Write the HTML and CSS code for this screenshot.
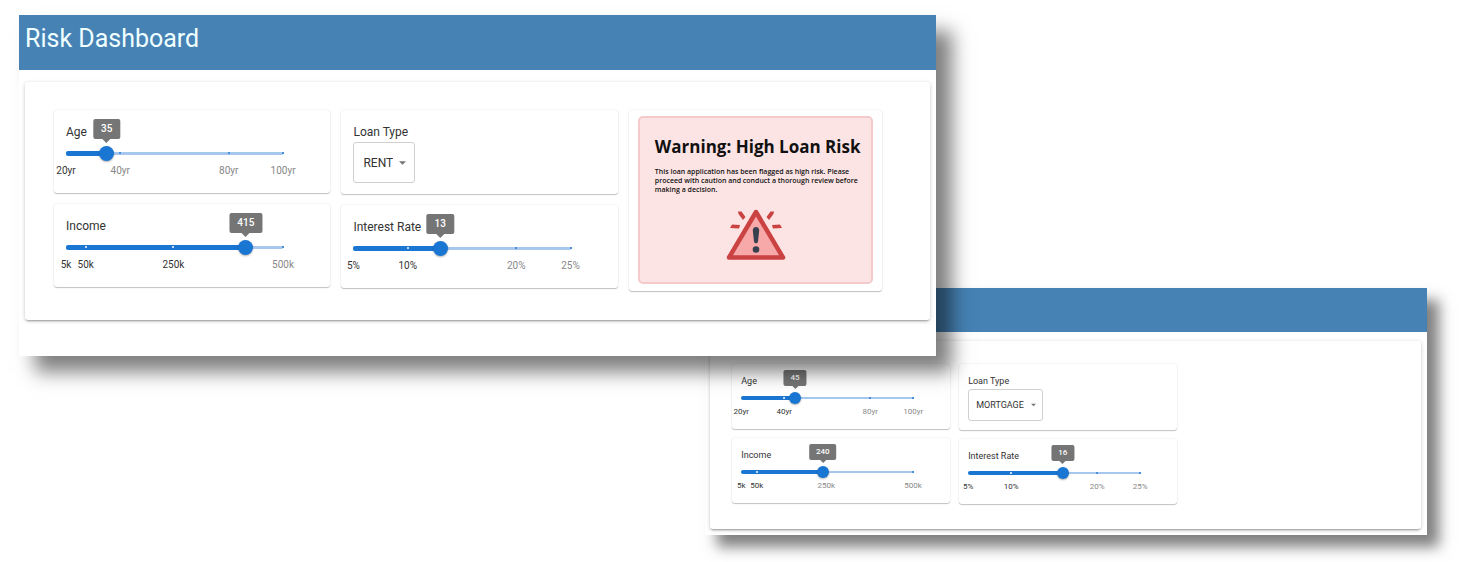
FILE: index.html
```
<!DOCTYPE html>
<html lang="en">
<head>
<meta charset="utf-8">
<title>Risk Dashboard</title>
<link rel="stylesheet" href="styles.css">
</head>
<body>
<main class="stage">

  <section class="window window-back" aria-label="Mortgage application">
    <header class="bar"></header>
    <div class="panel">
      <div class="column">
        <div class="card">
          <label class="label" for="age-b">Age</label>
          <div class="slider">
            <div class="rail"></div><div class="fill" style="width:31.25%"></div>
            <i class="tick on" style="left:25%"></i><i class="tick" style="left:75%"></i><i class="tick" style="left:100%"></i>
            <input id="age-b" type="range" min="20" max="100" value="45">
            <output class="bubble" for="age-b" style="left:31.25%">45</output>
          </div>
          <div class="marks"><span class="on" style="left:0%">20yr</span><span class="on" style="left:25%">40yr</span><span style="left:75%">80yr</span><span style="left:100%">100yr</span></div>
        </div>
        <div class="card">
          <label class="label" for="income-b">Income</label>
          <div class="slider">
            <div class="rail"></div><div class="fill" style="width:47.47%"></div>
            <i class="tick on" style="left:9.09%"></i><i class="tick" style="left:100%"></i>
            <input id="income-b" type="range" min="5" max="500" value="240">
            <output class="bubble" for="income-b" style="left:47.47%">240</output>
          </div>
          <div class="marks"><span class="on" style="left:0%">5k</span><span class="on" style="left:9.09%">50k</span><span style="left:49.49%">250k</span><span style="left:100%">500k</span></div>
        </div>
      </div>
      <div class="column">
        <div class="card card-select">
          <label class="label" for="loan-b">Loan Type</label>
          <div class="select">
            <select id="loan-b"><option>MORTGAGE</option></select>
            <svg class="caret" viewBox="0 0 10 5" aria-hidden="true"><path d="M0 0h10L5 5z"/></svg>
          </div>
        </div>
        <div class="card">
          <label class="label" for="rate-b">Interest Rate</label>
          <div class="slider">
            <div class="rail"></div><div class="fill" style="width:55%"></div>
            <i class="tick on" style="left:25%"></i><i class="tick" style="left:75%"></i><i class="tick" style="left:100%"></i>
            <input id="rate-b" type="range" min="5" max="25" value="16">
            <output class="bubble" for="rate-b" style="left:55%">16</output>
          </div>
          <div class="marks"><span class="on" style="left:0%">5%</span><span class="on" style="left:25%">10%</span><span style="left:75%">20%</span><span style="left:100%">25%</span></div>
        </div>
      </div>
    </div>
  </section>

  <section class="window window-front" aria-label="Rent application">
    <header class="bar"><h1 class="title">Risk Dashboard</h1></header>
    <div class="panel">
      <div class="column">
        <div class="card">
          <label class="label" for="age-f">Age</label>
          <div class="slider">
            <div class="rail"></div><div class="fill" style="width:18.75%"></div>
            <i class="tick" style="left:25%"></i><i class="tick" style="left:75%"></i><i class="tick" style="left:100%"></i>
            <input id="age-f" type="range" min="20" max="100" value="35">
            <output class="bubble" for="age-f" style="left:18.75%">35</output>
          </div>
          <div class="marks"><span class="on" style="left:0%">20yr</span><span style="left:25%">40yr</span><span style="left:75%">80yr</span><span style="left:100%">100yr</span></div>
        </div>
        <div class="card">
          <label class="label" for="income-f">Income</label>
          <div class="slider">
            <div class="rail"></div><div class="fill" style="width:82.83%"></div>
            <i class="tick on" style="left:9.09%"></i><i class="tick on" style="left:49.49%"></i><i class="tick" style="left:100%"></i>
            <input id="income-f" type="range" min="5" max="500" value="415">
            <output class="bubble" for="income-f" style="left:82.83%">415</output>
          </div>
          <div class="marks"><span class="on" style="left:0%">5k</span><span class="on" style="left:9.09%">50k</span><span class="on" style="left:49.49%">250k</span><span style="left:100%">500k</span></div>
        </div>
      </div>
      <div class="column">
        <div class="card card-select">
          <label class="label" for="loan-f">Loan Type</label>
          <div class="select">
            <select id="loan-f"><option>RENT</option></select>
            <svg class="caret" viewBox="0 0 10 5" aria-hidden="true"><path d="M0 0h10L5 5z"/></svg>
          </div>
        </div>
        <div class="card">
          <label class="label" for="rate-f">Interest Rate</label>
          <div class="slider">
            <div class="rail"></div><div class="fill" style="width:40%"></div>
            <i class="tick on" style="left:25%"></i><i class="tick" style="left:75%"></i><i class="tick" style="left:100%"></i>
            <input id="rate-f" type="range" min="5" max="25" value="13">
            <output class="bubble" for="rate-f" style="left:40%">13</output>
          </div>
          <div class="marks"><span class="on" style="left:0%">5%</span><span class="on" style="left:25%">10%</span><span style="left:75%">20%</span><span style="left:100%">25%</span></div>
        </div>
      </div>
      <div class="column">
        <div class="card card-alert">
          <div class="alert" role="alert">
            <h2 class="alert-title">Warning: High Loan Risk</h2>
            <p class="alert-text">This loan application has been flagged as high risk. Please<br>proceed with caution and conduct a thorough review before<br>making a decision.</p>
            <svg class="alert-icon" viewBox="0 0 60 54" aria-hidden="true">
              <path d="M30 4 57 49.500H3z" fill="#f7a8a8" stroke="#cb4242" stroke-width="4.500" stroke-linejoin="round"/>
              <path d="M12 3.500h3.500l4 5.500-2.500 3-4.500-6zM48 3.500h-3.500l-4 5.500 2.500 3 4.500-6zM6 16.500l8 .5-1 3.500-9-.5zM54 16.500l-8 .5 1 3.500 9-.5z" fill="#cb4242"/>
              <path d="M26.800 22.500c0-4.600 6.400-4.600 6.400 0L32 33.500c-.3 2.400-3.700 2.400-4 0z" fill="#36404e"/>
              <circle cx="30" cy="41.500" r="3.300" fill="#36404e"/>
            </svg>
          </div>
        </div>
      </div>
    </div>
  </section>

</main>
</body>
</html>
```
FILE: styles.css
```
* { box-sizing: border-box; }

body {
  margin: 0;
  background: #fff;
  color: #333;
  font-family: Roboto, "Liberation Sans", sans-serif;
}

.stage {
  position: relative;
  min-height: 100vh;
  overflow: hidden;
}

/* Overlapping windows; each sets its own scale through variables */
.window {
  position: absolute;
  background: #fff;
}

.window-front {
  --gap: 11px;
  --pad: 12px;
  --label: 12px;
  --label-line: 20px;
  --small: 10px;
  --track: 22px;
  --marks: 14px;
  --tail: 15px;
  --thumb: 15px;
  --fill: 5px;
  --rail: 3px;
  --bubble: 20px;
  --bubble-pad: 8px;
  --bubble-lift: 14px;
  --arrow: 4px;
  --select: 41px;
  --select-left: 9px;
  --select-right: 21px;
  --select-tail: 11px;
  --caret: 7px;
  --slider: 86%;
  top: 15px;
  left: 19px;
  width: 62.4%;
  padding-bottom: 36px;
  box-shadow: 16px 16px 18px rgba(0, 0, 0, .5);
}

.window-back {
  --gap: 9px;
  --pad: 9px;
  --label: 9px;
  --label-line: 16px;
  --small: 8px;
  --track: 18px;
  --marks: 10px;
  --tail: 12px;
  --thumb: 12px;
  --fill: 4px;
  --rail: 2px;
  --bubble: 16px;
  --bubble-pad: 7px;
  --bubble-lift: 12px;
  --arrow: 3px;
  --select: 32px;
  --select-left: 7px;
  --select-right: 18px;
  --select-tail: 9px;
  --caret: 5px;
  --slider: 86%;
  top: 288px;
  right: 43px;
  width: 49.1%;
  padding-bottom: 6px;
  box-shadow: 12px 12px 13px rgba(0, 0, 0, .5);
}

.bar { background: #4682b4; }
.window-front .bar { min-height: 55px; padding: 8px 6px; }
.window-back .bar { min-height: 44px; }

.title {
  margin: 0;
  color: #f0ffff;
  font-size: 25px;
  font-weight: 400;
  line-height: 32px;
}

.panel {
  display: grid;
  gap: var(--gap);
  border-radius: 3px;
  box-shadow: 0 2px 2px -1px rgba(0, 0, 0, .3), 0 1px 4px rgba(0, 0, 0, .2);
}
.window-front .panel {
  grid-template-columns: 276fr 276fr 253fr;
  margin: 12px 6px 0;
  padding: 28px 48px 29px 29px;
}
.window-back .panel {
  grid-template-columns: 218fr 218fr 213fr;
  margin: 9px 6px 0 5px;
  padding: 23px 22px 25px;
}

.column {
  display: flex;
  flex-direction: column;
  gap: var(--gap);
}

.card {
  padding: var(--pad) var(--pad) var(--tail);
  border-radius: 3px;
  box-shadow: 0 1px 1px rgba(0, 0, 0, .22), 0 0 2px rgba(0, 0, 0, .12);
}
.card-select { padding-bottom: var(--select-tail); }

.label {
  display: block;
  width: max-content;
  font-size: var(--label);
  line-height: var(--label-line);
}

.slider {
  position: relative;
  display: flex;
  align-items: center;
  width: var(--slider);
  height: var(--track);
}
.rail, .fill {
  position: absolute;
  left: 0;
  border-radius: 2px;
}
.rail { width: 100%; height: var(--rail); background: #a6c8ee; }
.fill { height: var(--fill); background: #1976d2; }

.tick {
  position: absolute;
  width: 2px;
  height: 2px;
  margin-left: -1px;
  background: #4a8fdb;
}
.tick.on { background: #c6dcf4; }

.slider input {
  position: relative;
  flex: none;
  width: calc(100% + var(--thumb));
  height: var(--thumb);
  margin: 0 calc(var(--thumb) / -2);
  appearance: none;
  background: transparent;
}
.slider input::-webkit-slider-thumb {
  appearance: none;
  width: var(--thumb);
  height: var(--thumb);
  border-radius: 50%;
  background: #1976d2;
  box-shadow: 0 1px 2px rgba(0, 0, 0, .3);
}

.bubble {
  position: absolute;
  bottom: calc(50% + var(--bubble-lift));
  padding: 0 var(--bubble-pad);
  transform: translateX(-50%);
  border-radius: 2px;
  background: #757575;
  color: #fff;
  font-size: var(--small);
  font-weight: 500;
  line-height: var(--bubble);
}
.bubble::after {
  content: "";
  position: absolute;
  top: 100%;
  left: 50%;
  margin-left: calc(var(--arrow) * -1);
  border: var(--arrow) solid transparent;
  border-top-color: #757575;
  border-bottom: 0;
}

.marks {
  position: relative;
  width: var(--slider);
  height: var(--marks);
  color: #888;
  font-size: var(--small);
  line-height: var(--marks);
}
.marks span {
  position: absolute;
  transform: translateX(-50%);
}
.marks .on { color: #333; }

.select {
  position: relative;
  width: max-content;
}
.select select {
  display: block;
  height: var(--select);
  padding: 0 var(--select-right) 0 var(--select-left);
  appearance: none;
  border: 1px solid #d0d0d0;
  border-radius: 3px;
  background: #fff;
  color: #333;
  font-family: inherit;
  font-size: var(--label);
}
.caret {
  position: absolute;
  top: 50%;
  right: var(--select-left);
  width: var(--caret);
  height: 4px;
  margin-top: -2px;
  fill: #757575;
  pointer-events: none;
}

.card-alert { padding: 6px 9px 7px; }
.alert {
  padding: 19px 0 20px 15px;
  border: 2px solid #f5caca;
  border-radius: 5px;
  background: #fde4e4;
  color: #111;
  font-family: "Open Sans", "Noto Sans", sans-serif;
}
.alert-title {
  margin: 0;
  font-size: 17px;
  font-weight: 700;
  line-height: 20px;
  white-space: nowrap;
}
.alert-text {
  margin: 10px 0 14px;
  font-size: 7px;
  font-weight: 600;
  line-height: 9px;
  white-space: nowrap;
}
.alert-icon {
  display: block;
  width: 60px;
  height: 54px;
  margin-left: 71px;
}
```
